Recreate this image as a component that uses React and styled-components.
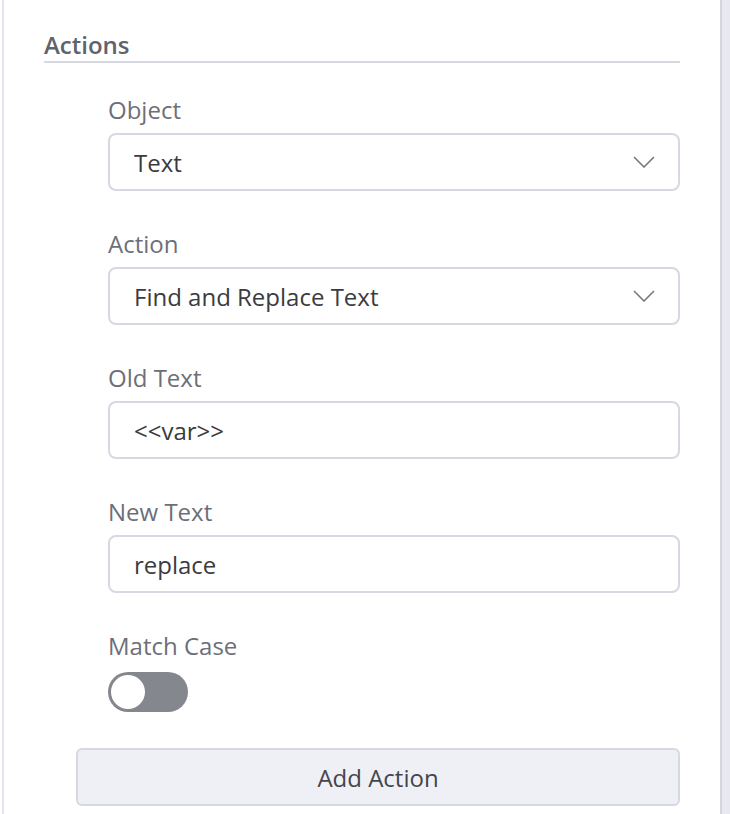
import React, { useState } from "react";
import styled, { createGlobalStyle } from "styled-components";

const GlobalStyle = createGlobalStyle`
  html, body {
    margin: 0;
    padding: 0;
    background: #e8e9f0;
    font-family: "Open Sans", "Liberation Sans", sans-serif;
  }
`;

const Page = styled.div`
  display: flex;
  min-height: 814px;
  padding-left: 2px;
  background: linear-gradient(to right, #ffffff 0, #ffffff 2px, #e8e9f0 2px);
`;

const Panel = styled.div`
  width: 636px;
  background: #ffffff;
  border-left: 2px solid #e3e5ec;
  border-right: 2px solid #d3d6de;
  padding: 29px 40px 0 40px;
`;

const SectionTitle = styled.h3`
  margin: 0;
  font-size: 24px;
  line-height: 32px;
  font-weight: 600;
  color: #60626c;
  border-bottom: 2px solid #d6d9e1;
`;

const Fields = styled.div`
  display: flex;
  flex-direction: column;
  gap: 35px;
  margin: 29px 0 0 64px;
`;

const Field = styled.div`
  display: flex;
  flex-direction: column;
  align-items: flex-start;
  gap: ${(p) => (p.$tight ? "8px" : "5px")};
`;

const Label = styled.label`
  font-size: 24px;
  line-height: 36px;
  color: #6d6f78;
`;

const Box = styled.div`
  box-sizing: border-box;
  width: 100%;
  height: 58px;
  display: flex;
  align-items: center;
  justify-content: space-between;
  padding: 0 23px 0 24px;
  border: 2px solid #d6d9e2;
  border-radius: 8px;
  background: #ffffff;
  font-size: 24px;
  color: #3b3b40;
`;

const Input = styled.input`
  box-sizing: border-box;
  width: 100%;
  height: 58px;
  padding: 0 24px;
  border: 2px solid #d6d9e2;
  border-radius: 8px;
  background: #ffffff;
  font-family: inherit;
  font-size: 24px;
  color: #3b3b40;
  outline: none;
`;

const Track = styled.button`
  width: 80px;
  height: 40px;
  padding: 3px;
  border: none;
  border-radius: 20px;
  background: ${(p) => (p.$on ? "#4a7bd0" : "#85878e")};
  display: flex;
  justify-content: ${(p) => (p.$on ? "flex-end" : "flex-start")};
  cursor: pointer;
`;

const Knob = styled.span`
  width: 34px;
  height: 34px;
  border-radius: 50%;
  background: #ffffff;
`;

const AddButton = styled.button`
  box-sizing: border-box;
  width: 604px;
  height: 58px;
  margin: 36px 0 0 32px;
  border: 2px solid #d6d9e2;
  border-radius: 6px;
  background: #eff0f5;
  font-family: inherit;
  font-size: 24px;
  color: #45464c;
  cursor: pointer;
`;

function Chevron() {
  return (
    <svg width="22" height="12" viewBox="0 0 22 12" fill="none">
      <path d="M1 1 L11 11 L21 1" stroke="#77797f" strokeWidth="1.6" />
    </svg>
  );
}

function Select({ value }) {
  return (
    <Box>
      <span>{value}</span>
      <Chevron />
    </Box>
  );
}

export default function App() {
  const [oldText, setOldText] = useState("<<var>>");
  const [newText, setNewText] = useState("replace");
  const [matchCase, setMatchCase] = useState(false);

  return (
    <>
      <GlobalStyle />
      <Page>
        <Panel>
          <SectionTitle>Actions</SectionTitle>
          <Fields>
            <Field>
              <Label>Object</Label>
              <Select value="Text" />
            </Field>
            <Field>
              <Label>Action</Label>
              <Select value="Find and Replace Text" />
            </Field>
            <Field>
              <Label>Old Text</Label>
              <Input value={oldText} onChange={(e) => setOldText(e.target.value)} />
            </Field>
            <Field>
              <Label>New Text</Label>
              <Input value={newText} onChange={(e) => setNewText(e.target.value)} />
            </Field>
            <Field $tight>
              <Label>Match Case</Label>
              <Track $on={matchCase} onClick={() => setMatchCase(!matchCase)}>
                <Knob />
              </Track>
            </Field>
          </Fields>
          <AddButton>Add Action</AddButton>
        </Panel>
      </Page>
    </>
  );
}
